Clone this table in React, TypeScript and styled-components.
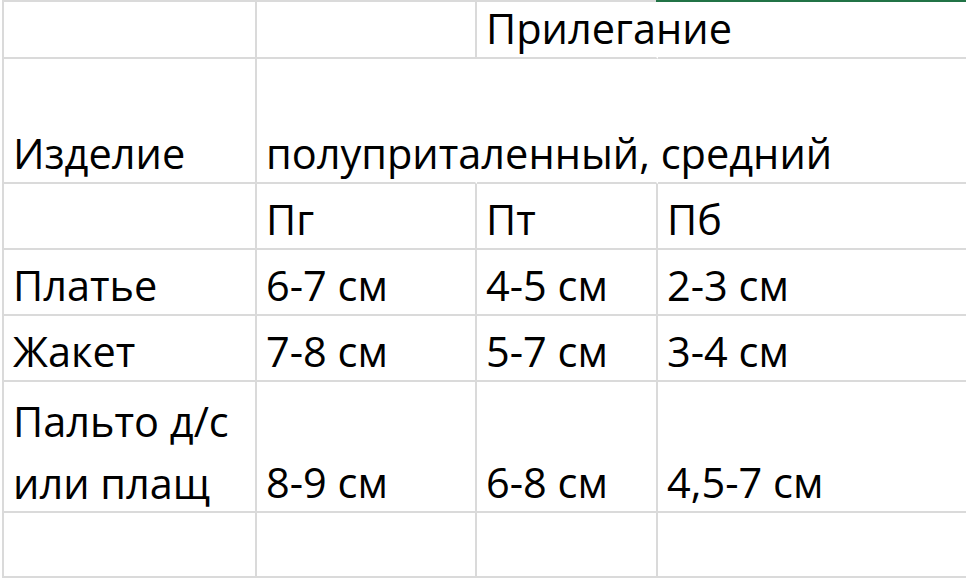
import React from "react";
import styled, { createGlobalStyle } from "styled-components";

const GRID = "#dadada";

const GlobalStyle = createGlobalStyle`
  html, body {
    margin: 0;
    background: #ffffff;
  }
  body {
    font-family: "Open Sans", "Liberation Sans", sans-serif;
    color: #000000;
    overflow: hidden;
  }
`;

const Sheet = styled.div`
  display: grid;
  grid-template-columns: 253px 220px 181px 1fr;
  grid-template-rows: 57px 125px 66px 66px 66px 131px 65px;
  width: 1000px;
  margin-left: 2px;
  border-top: 2px solid ${GRID};
  border-left: 2px solid ${GRID};
`;

const Cell = styled.div<{ $noRight?: boolean; $selected?: boolean; $wrap?: boolean }>`
  position: relative;
  box-sizing: border-box;
  display: flex;
  align-items: flex-end;
  padding-left: 9px;
  border-right: 2px solid ${(p) => (p.$noRight ? "transparent" : GRID)};
  border-bottom: 2px solid ${GRID};
  font-size: 41.5px;
  line-height: ${(p) => (p.$wrap ? "62px" : "57px")};
  white-space: ${(p) => (p.$wrap ? "normal" : "nowrap")};
  min-width: 0;

  ${(p) =>
    p.$selected &&
    `
    &::before {
      content: "";
      position: absolute;
      top: -2px;
      left: -2px;
      right: 0;
      height: 2px;
      background: #217346;
    }
  `}
`;

const Text = styled.span<{ $lift?: number }>`
  margin-bottom: ${(p) => (p.$lift ? `-${p.$lift}px` : "0")};
`;

type CellDef = { text?: string; noRight?: boolean; selected?: boolean; wrap?: boolean };

const rows: CellDef[][] = [
  [{}, {}, { text: "Прилегание", noRight: true }, { selected: true }],
  [{ text: "Изделие" }, { text: "полуприталенный, средний", noRight: true }, { noRight: true }, {}],
  [{}, { text: "Пг" }, { text: "Пт" }, { text: "Пб" }],
  [{ text: "Платье" }, { text: "6-7 см" }, { text: "4-5 см" }, { text: "2-3 см" }],
  [{ text: "Жакет" }, { text: "7-8 см" }, { text: "5-7 см" }, { text: "3-4 см" }],
  [{ text: "Пальто д/с или плащ", wrap: true }, { text: "8-9 см" }, { text: "6-8 см" }, { text: "4,5-7 см" }],
  [{}, {}, {}, {}],
];

export default function App() {
  return (
    <>
      <GlobalStyle />
      <Sheet>
        {rows.map((row, r) =>
          row.map((c, i) => (
            <Cell key={`${r}-${i}`} $noRight={c.noRight} $selected={c.selected} $wrap={c.wrap}>
              {c.text && <Text $lift={c.wrap ? 3 : 0}>{c.text}</Text>}
            </Cell>
          ))
        )}
      </Sheet>
    </>
  );
}
